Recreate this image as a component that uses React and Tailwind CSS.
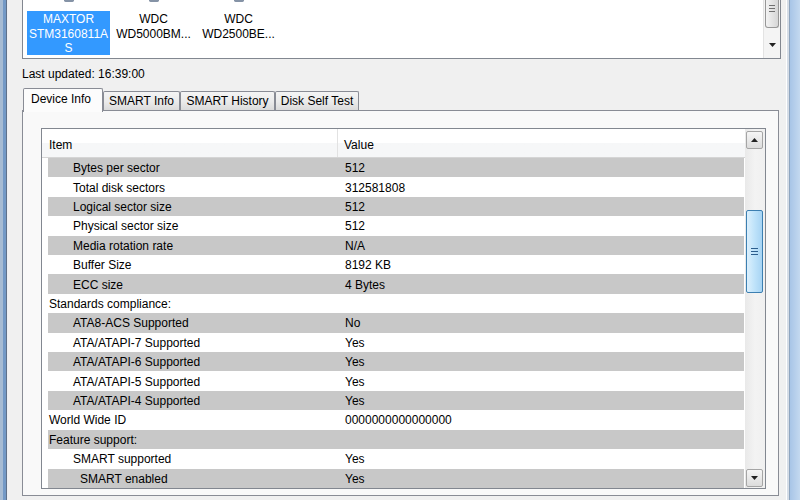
import { Fragment } from 'react'

const DRIVES = [
  { lines: ['MAXTOR', 'STM3160811A', 'S'], selected: true },
  { lines: ['WDC', 'WD5000BM...'] },
  { lines: ['WDC', 'WD2500BE...'] },
]

const TABS = [
  { label: 'Device Info', w: 'w-[80px]', active: true },
  { label: 'SMART Info', w: 'w-[77px]' },
  { label: 'SMART History', w: 'w-[95px]' },
  { label: 'Disk Self Test', w: 'w-[84px]' },
]

// [item, value, indent level]
const ROWS = [
  ['Bytes per sector', '512', 1],
  ['Total disk sectors', '312581808', 1],
  ['Logical sector size', '512', 1],
  ['Physical sector size', '512', 1],
  ['Media rotation rate', 'N/A', 1],
  ['Buffer Size', '8192 KB', 1],
  ['ECC size', '4 Bytes', 1],
  ['Standards compliance:', '', 0],
  ['ATA8-ACS Supported', 'No', 1],
  ['ATA/ATAPI-7 Supported', 'Yes', 1],
  ['ATA/ATAPI-6 Supported', 'Yes', 1],
  ['ATA/ATAPI-5 Supported', 'Yes', 1],
  ['ATA/ATAPI-4 Supported', 'Yes', 1],
  ['World Wide ID', '0000000000000000', 0],
  ['Feature support:', '', 0],
  ['SMART supported', 'Yes', 1],
  ['SMART enabled', 'Yes', 2],
]

const INDENT = ['pl-[1px]', 'pl-[25px]', 'pl-[32px]']

function Arrow({ up }) {
  return (
    <svg width="7" height="4" viewBox="0 0 7 4">
      {up ? <path d="M0 4 L3.5 0 L7 4 Z" fill="#222" /> : <path d="M0 0 L7 0 L3.5 4 Z" fill="#222" />}
    </svg>
  )
}

function ScrollButton({ up }) {
  return (
    <div className="h-[18px] rounded-[2px] border border-[#a5a5a5] bg-gradient-to-b from-[#f6f6f6] to-[#dcdcdc] flex items-center justify-center">
      <Arrow up={up} />
    </div>
  )
}

function DriveList() {
  return (
    <div className="h-[59px] border border-t-0 border-[#828790] bg-white flex">
      <div className="flex-1 flex gap-[2px] pl-[4px]">
        {DRIVES.map((d, i) => (
          <div key={i} className="w-[83px] flex flex-col">
            <div className="h-[11px] flex justify-center">
              <svg width="10" height="2" viewBox="0 0 10 2">
                <path d="M0 0 H10 V0.6 Q10 2 8.5 2 H1.5 Q0 2 0 0.6 Z" fill="#8593a6" />
              </svg>
            </div>
            <div className={`h-[44px] text-center leading-[14.7px] pt-[1px] ${d.selected ? 'bg-[#3399ff] text-white' : ''}`}>
              {d.lines.map((l, j) => <div key={j}>{l}</div>)}
            </div>
          </div>
        ))}
      </div>
      {/* scrollbar, thumb scrolled to top */}
      <div className="w-[17px] border-l border-[#e3e3e3] bg-[#f4f4f4] flex flex-col">
        <div className="h-[28px] mx-[1px] rounded-b-[3px] border border-t-0 border-[#979797] bg-gradient-to-r from-[#f3f3f3] to-[#d6d6d6] flex flex-col items-center pt-[5px] gap-[2px]">
          <div className="w-[6px] h-[1px] bg-[#707070]" />
          <div className="w-[6px] h-[1px] bg-[#707070]" />
          <div className="w-[6px] h-[1px] bg-[#707070]" />
        </div>
        <div className="flex-1 flex items-end justify-center pb-[11px]">
          <Arrow />
        </div>
      </div>
    </div>
  )
}

function Tabs() {
  return (
    <div className="mt-[6px] h-[23px] flex items-end pl-[1px]">
      {TABS.map((t) =>
        t.active ? (
          <div key={t.label} className={`${t.w} h-[24px] -mb-[1px] relative z-10 border border-b-0 border-[#898c95] bg-[#fcfcfc] rounded-t-[2px] pl-[7px] pt-[3px] leading-[15px]`}>
            {t.label}
          </div>
        ) : (
          <div key={t.label} className={`${t.w} h-[20px] border border-b-0 border-[#898c95] bg-gradient-to-b from-[#f4f4f4] via-[#ebebeb] to-[#d9d9d9] rounded-t-[2px] text-center pt-[2px] leading-[15px]`}>
            {t.label}
          </div>
        )
      )}
    </div>
  )
}

function InfoList() {
  return (
    <div className="border border-[#828790] bg-white flex">
      <div className="flex-1 flex flex-col">
        <div className="h-[29px] border-b border-[#d5d5d5] bg-gradient-to-b from-white from-50% to-[#f6f7f8] to-50% flex items-center">
          <div className="w-[296px] pl-[7px] pt-[3px] self-stretch flex items-center border-r border-[#e2e2e2]">Item</div>
          <div className="pl-[6px] pt-[3px]">Value</div>
        </div>
        <div className="ml-[6px] mr-[1px] flex flex-col">
          {ROWS.map(([item, value, lvl], i) => (
            <div key={i} className={`h-[19.41px] flex items-center pt-[1px] ${i % 2 === 0 ? 'bg-[#c8c8c8]' : ''}`}>
              <div className={`w-[297px] whitespace-nowrap ${INDENT[lvl]}`}>{item}</div>
              <div className="whitespace-nowrap">{value}</div>
            </div>
          ))}
        </div>
      </div>
      <div className="w-[20px] bg-gradient-to-r from-[#e9e9e9] via-[#f3f3f3] to-[#f0f0f0] flex flex-col pl-[1px] pr-[2px] pt-[2px] pb-[1px]">
        <ScrollButton up />
        <div className="flex-1 flex flex-col">
          <div className="mt-[61px] h-[83px] rounded-[2px] border border-[#3c7fb1] bg-gradient-to-r from-[#dcf0fd] via-[#bfe3fa] to-[#a7d4f4] flex flex-col items-center justify-center gap-[2px]">
            <div className="w-[7px] h-[1px] bg-[#2c5e8e]" />
            <div className="w-[7px] h-[1px] bg-[#2c5e8e]" />
            <div className="w-[7px] h-[1px] bg-[#2c5e8e]" />
          </div>
        </div>
        <ScrollButton />
      </div>
    </div>
  )
}

export default function App() {
  return (
    <div className="w-[800px] h-[500px] overflow-hidden flex bg-[#f0f0f0] text-[12px] text-black [font-family:'Liberation_Sans',Arial,sans-serif]">
      {/* left window frame */}
      <div className="flex shrink-0">
        <div className="w-[3px] bg-[#a6bbd3]" />
        <div className="w-[3px] bg-[#7399c6]" />
        <div className="w-[1px] bg-[#5f7088]" />
        <div className="w-[1px] bg-[#e9eef4]" />
      </div>

      <div className="flex-1 flex flex-col pl-[14px] pr-[5px]">
        <DriveList />
        <div className="mt-[7px] leading-[15px] pt-[1px]">Last updated: 16:39:00</div>
        <Tabs />
        <div className="w-[757px] border border-[#898c95] bg-[#f9f9f9] pt-[17px] pl-[18px] pr-[12px] pb-[6px] -mt-[1px]">
          <InfoList />
        </div>
      </div>

      {/* right window frame */}
      <div className="flex shrink-0">
        <div className="w-[1px] bg-white" />
        <div className="w-[2px] bg-[#d6dde6]" />
        <div className="w-[1px] bg-[#8fa5bf]" />
        <div className="w-[10px] bg-gradient-to-r from-[#a8c5e7] to-[#c4d9f0]" />
      </div>
    </div>
  )
}
